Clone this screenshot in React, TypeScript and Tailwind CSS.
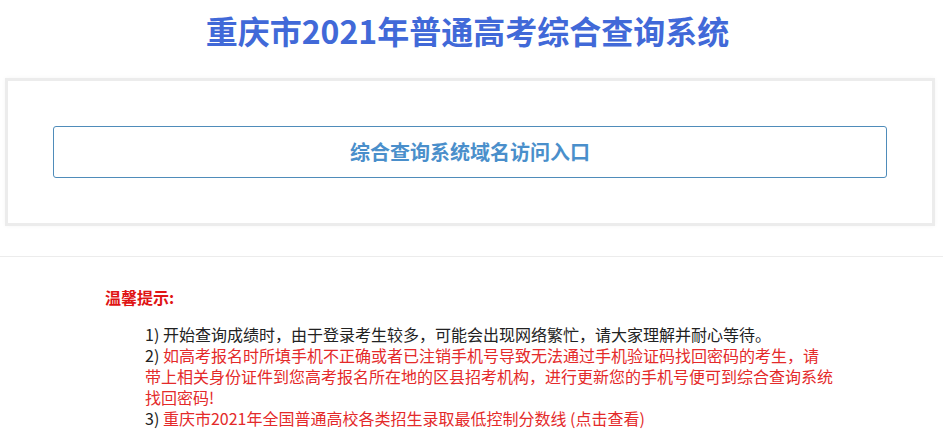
import React from 'react'

const tips = [
    { lines: ['开始查询成绩时，由于登录考生较多，可能会出现网络繁忙，请大家理解并耐心等待。'], red: false },
    {
        lines: [
            '如高考报名时所填手机不正确或者已注销手机号导致无法通过手机验证码找回密码的考生，请',
            '带上相关身份证件到您高考报名所在地的区县招考机构，进行更新您的手机号便可到综合查询系统',
            '找回密码!',
        ],
        red: true,
    },
    { lines: ['重庆市2021年全国普通高校各类招生录取最低控制分数线 (点击查看)'], red: true },
]

export default function App() {
    return (
        <div
            className="min-h-[439px] bg-white"
            style={{ fontFamily: '"Microsoft YaHei", "Noto Sans CJK SC", sans-serif' }}
        >
            {/* Header */}
            <h1 className="pt-[1px] pr-[8px] text-center text-[32px] font-bold leading-[58px] text-[#4169d8]">
                重庆市2021年普通高考综合查询系统
            </h1>

            {/* Entry panel */}
            <div className="mt-[19px] ml-[5px] mr-[8px] border-[3px] border-[#ececec] p-[45px] shadow-[0_0_4px_rgba(0,0,0,0.04)]">
                <a
                    href="#"
                    className="flex h-[52px] items-center justify-center rounded-[3px] border border-[#4f8cba] text-[20px] font-bold text-[#4a8fcb]"
                >
                    综合查询系统域名访问入口
                </a>
            </div>

            <hr className="mt-[30px] border-0 border-t border-[#ececec]" />

            {/* Tips */}
            <div className="pt-[30px] pl-[105px] text-[16px] leading-[21px]">
                <p className="font-bold text-[#e01515]">温馨提示:</p>
                <ol className="mt-[16px] pl-[40px] text-[#222]">
                    {tips.map((tip, i) => (
                        <li key={i}>
                            {i + 1}){' '}
                            <span className={tip.red ? 'text-[#e42a2a]' : ''}>
                                {tip.lines.map((line, j) => (
                                    <React.Fragment key={j}>
                                        {j > 0 && <br />}
                                        {line}
                                    </React.Fragment>
                                ))}
                            </span>
                        </li>
                    ))}
                </ol>
            </div>
        </div>
    )
}
